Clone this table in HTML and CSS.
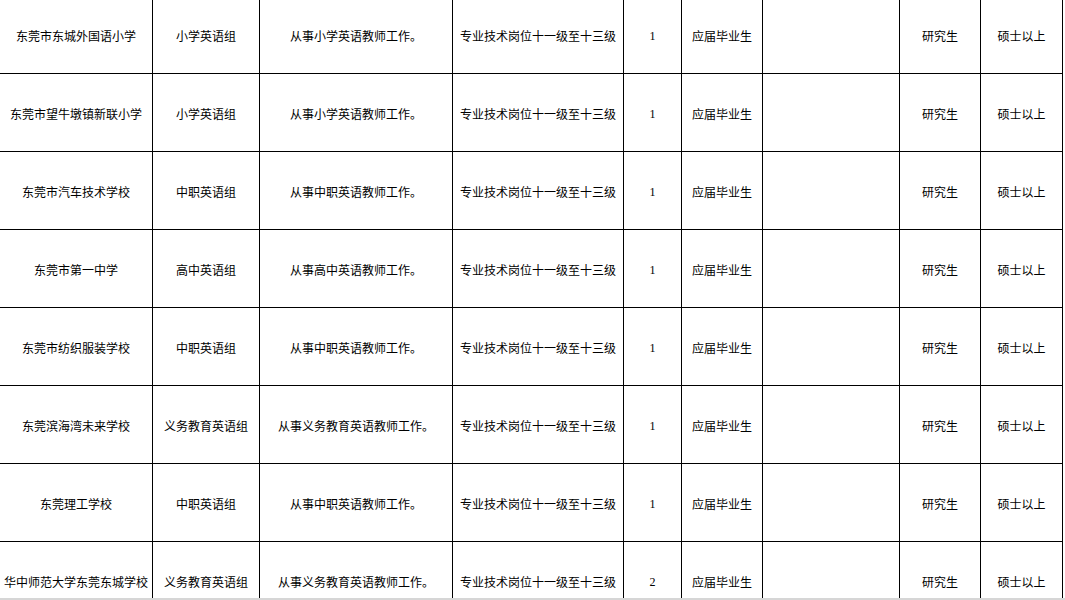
FILE: index.html
```html
<!DOCTYPE html>
<html lang="zh-CN">
<head>
<meta charset="utf-8">
<link rel="stylesheet" href="styles.css">
</head>
<body>
<table class="grid">
  <colgroup>
    <col class="c1"><col class="c2"><col class="c3"><col class="c4"><col class="c5"><col class="c6"><col class="c7"><col class="c8"><col class="c9">
  </colgroup>
  <tbody>
    <tr><td>东莞市东城外国语小学</td><td>小学英语组</td><td>从事小学英语教师工作。</td><td>专业技术岗位十一级至十三级</td><td class="num">1</td><td class="left">应届毕业生</td><td></td><td>研究生</td><td>硕士以上</td></tr>
    <tr><td>东莞市望牛墩镇新联小学</td><td>小学英语组</td><td>从事小学英语教师工作。</td><td>专业技术岗位十一级至十三级</td><td class="num">1</td><td class="left">应届毕业生</td><td></td><td>研究生</td><td>硕士以上</td></tr>
    <tr><td>东莞市汽车技术学校</td><td>中职英语组</td><td>从事中职英语教师工作。</td><td>专业技术岗位十一级至十三级</td><td class="num">1</td><td class="left">应届毕业生</td><td></td><td>研究生</td><td>硕士以上</td></tr>
    <tr><td>东莞市第一中学</td><td>高中英语组</td><td>从事高中英语教师工作。</td><td>专业技术岗位十一级至十三级</td><td class="num">1</td><td class="left">应届毕业生</td><td></td><td>研究生</td><td>硕士以上</td></tr>
    <tr><td>东莞市纺织服装学校</td><td>中职英语组</td><td>从事中职英语教师工作。</td><td>专业技术岗位十一级至十三级</td><td class="num">1</td><td class="left">应届毕业生</td><td></td><td>研究生</td><td>硕士以上</td></tr>
    <tr><td>东莞滨海湾未来学校</td><td>义务教育英语组</td><td>从事义务教育英语教师工作。</td><td>专业技术岗位十一级至十三级</td><td class="num">1</td><td class="left">应届毕业生</td><td></td><td>研究生</td><td>硕士以上</td></tr>
    <tr><td>东莞理工学校</td><td>中职英语组</td><td>从事中职英语教师工作。</td><td>专业技术岗位十一级至十三级</td><td class="num">1</td><td class="left">应届毕业生</td><td></td><td>研究生</td><td>硕士以上</td></tr>
    <tr><td>华中师范大学东莞东城学校</td><td>义务教育英语组</td><td>从事义务教育英语教师工作。</td><td>专业技术岗位十一级至十三级</td><td class="num">2</td><td class="left">应届毕业生</td><td></td><td>研究生</td><td>硕士以上</td></tr>
  </tbody>
</table>
<div class="scroll-edge"></div>
</body>
</html>
```
FILE: styles.css
```css
html, body {
  margin: 0;
  padding: 0;
  background: #ffffff;
  overflow: hidden;
  height: 600px;
}
.grid {
  border-collapse: collapse;
  table-layout: fixed;
  width: 1063px;
  margin-top: -5px;
  margin-left: -1px;
  font-family: "Noto Sans CJK SC", "Noto Sans", sans-serif;
  font-size: 12px;
  color: #000;
}
.c1 { width: 153px; }
.c2 { width: 107px; }
.c3 { width: 193px; }
.c4 { width: 171px; }
.c5 { width: 58px; }
.c6 { width: 81px; }
.c7 { width: 137px; }
.c8 { width: 81px; }
.c9 { width: 82px; }
.grid tr { height: 78px; }
.grid td {
  border: 1px solid #000;
  padding: 2px 0 0 0;
  text-align: center;
  vertical-align: middle;
  white-space: nowrap;
  overflow: hidden;
  line-height: 14px;
}
.grid td.left {
  text-align: left;
  padding-left: 10px;
}
.grid td.num {
  font-family: "Liberation Serif", serif;
  font-size: 12px;
}
.scroll-edge {
  position: fixed;
  left: 0;
  right: 0;
  bottom: 0;
  height: 2px;
  background: #d6d6d6;
}
```
